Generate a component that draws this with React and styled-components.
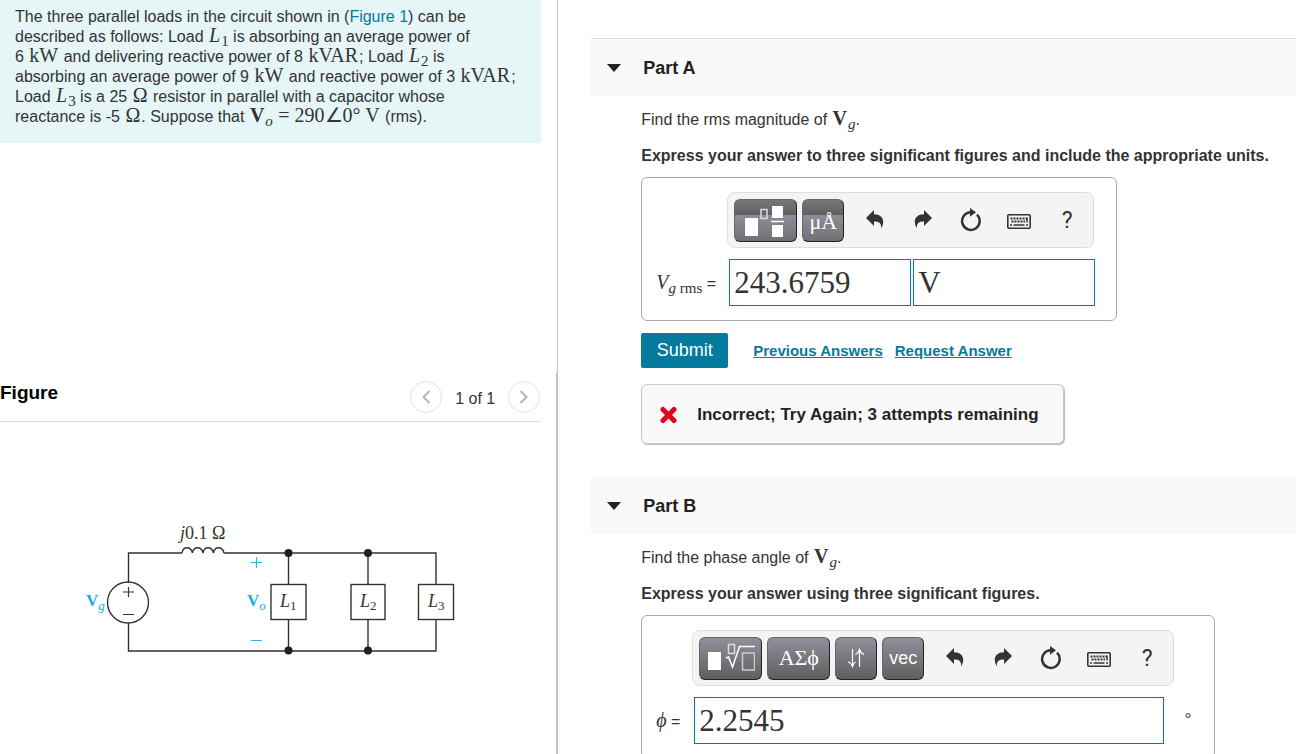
import React, { useState } from 'react';
import styled, { createGlobalStyle } from 'styled-components';

const GlobalStyle = createGlobalStyle`
  * {
    box-sizing: border-box;
  }

  body {
    margin: 0;
    background: #fff;
    color: #333;
    font-family: "Liberation Sans", Arial, sans-serif;
    font-size: 16px;
    line-height: 20px;
  }

  p, h2, h3 {
    margin: 0;
  }

  button, input {
    font-family: inherit;
    color: inherit;
  }
`;

const Page = styled.div`
  display: grid;
  grid-template-columns: 43% 1fr;
  height: 100vh;
  overflow: hidden;
`;

const LeftPane = styled.aside`
  display: flex;
  flex-direction: column;
  min-height: 0;
`;

const ProblemPane = styled.section`
  flex: 0 0 373px;
  padding-right: 16px;
  border-right: 1px solid #b8c6d9;
  margin-right: -1px;
`;

const Problem = styled.p`
  padding: 7px 14px 16px 15px;
  background: #e6f6f7;
`;

const FigureLink = styled.a`
  color: #047a9c;
  text-decoration: none;
`;

const Tex = styled.span`
  padding: 0 1px;
  font-family: "Liberation Serif", "Times New Roman", serif;
  font-size: 20px;
  line-height: 16px;
  font-style: ${props => (props.$italic ? 'italic' : 'normal')};
  font-weight: ${props => (props.$bold ? 'bold' : 'normal')};
`;

const Sub = styled.sub`
  font-family: "Liberation Serif", "Times New Roman", serif;
  font-size: 15px;
  font-weight: normal;
  line-height: 0;
  vertical-align: -4px;
  font-style: ${props => (props.$italic ? 'italic' : 'normal')};
`;

const FigurePane = styled.section`
  flex: 1;
  padding-right: 16px;
  border-right: 2px solid #b8c6d9;
  margin-right: -1px;
`;

const FigureHeader = styled.div`
  display: flex;
  align-items: center;
  justify-content: space-between;
  height: 49px;
  border-bottom: 1px solid #dcdcdc;
`;

const FigureTitle = styled.h2`
  padding-bottom: 8px;
  font-size: 19px;
  line-height: 24px;
  color: #000;
`;

const Pager = styled.div`
  display: flex;
  align-items: center;
  gap: 13px;
`;

const PagerLabel = styled.span`
  padding-top: 4px;
`;

const PagerButton = styled.button`
  display: flex;
  align-items: center;
  justify-content: center;
  width: 32px;
  height: 32px;
  padding: 0;
  border: 1px solid #e2e2e2;
  border-radius: 50%;
  background: #fff;
  color: #b5b5b5;
`;

const Circuit = styled.svg`
  display: block;
  margin: 98px 0 0 80px;
  font-family: "Liberation Serif", "Times New Roman", serif;
`;

const RightPane = styled.main`
  min-width: 0;
  padding: 38px 0 0 34px;
  overflow: hidden;
`;

const Part = styled.section`
  padding-bottom: 32px;
`;

const PartHeader = styled.header`
  display: flex;
  align-items: center;
  height: 58px;
  border-top: 1px solid ${props => (props.$first ? '#dcdcdc' : '#f9f9f9')};
  background: #f9f9f9;
`;

const Toggle = styled.button`
  display: flex;
  padding: 0 16px;
  border: 0;
  background: none;
  color: #222;
`;

const PartTitle = styled.h3`
  padding-left: 6px;
  font-size: 18px;
  color: #222;
`;

const PartBody = styled.div`
  padding-left: 50px;
`;

const Question = styled.p`
  padding: 14px 0 13px;
`;

const Instruction = styled.p`
  padding: 3px 0 11px;
  font-weight: bold;
  white-space: nowrap;
`;

const AnswerBox = styled.div`
  display: inline-grid;
  grid-template-columns: ${props => props.$labelWidth} auto;
  row-gap: 11px;
  padding: 14px ${props => (props.$unit ? '13px' : '21px')} 14px 14px;
  border: 1px solid #aaa;
  border-radius: 6px;
  vertical-align: top;
`;

const Toolbar = styled.div`
  grid-column: 2;
  justify-self: start;
  display: flex;
  align-items: center;
  gap: 5px;
  height: 56px;
  padding: 0 2px 0 6px;
  border: 1px solid #ddd;
  border-radius: 8px;
  background: #f4f4f4;
`;

const KeyButton = styled.button`
  display: flex;
  align-items: center;
  justify-content: center;
  width: ${props => (props.$wide ? '63px' : '42px')};
  height: 43px;
  padding: ${props => (props.$split ? '4px' : '0')} 0 0;
  border: 1px solid #666;
  border-right-color: #222;
  border-bottom-color: #222;
  border-radius: 6px;
  background: ${props => (props.$split
    ? 'linear-gradient(#777 0, #606060 15px, #8f8d98 15px, #717174 100%)'
    : 'linear-gradient(#918f9b, #5f5f5f)')};
  color: #fff;
  font-family: ${props => (props.$sans ? 'inherit' : '"Liberation Serif", serif')};
  font-size: ${props => (props.$sans ? '18px' : '22px')};
`;

const IconGroup = styled.div`
  display: flex;
  margin-left: 2px;
`;

const IconButton = styled.button`
  display: flex;
  align-items: center;
  justify-content: center;
  width: 48px;
  height: 40px;
  padding: 0;
  border: 0;
  background: none;
  font-family: Roboto, sans-serif;
  font-size: 23px;
`;

const AnswerLabel = styled.label`
  grid-column: 1;
  align-self: center;
  padding-top: 2px;
  font-size: 16px;
  white-space: nowrap;

  ${Tex} {
    padding: 0;
  }
`;

const Fields = styled.div`
  display: flex;
  align-items: center;
  gap: 2px;
  padding-left: 2px;
`;

const Field = styled.input`
  width: ${props => (props.$wide ? '470px' : '182px')};
  height: 47px;
  padding: 0 4px;
  border: 1px solid #047a9c;
  border-radius: 0;
  background: #fff;
  font-family: "Liberation Serif", "Times New Roman", serif;
  font-size: 31px;
`;

const Unit = styled.span`
  padding: 0 8px 10px 17px;
  color: #555;
  font-family: "Liberation Serif", "Times New Roman", serif;
`;

const Actions = styled.div`
  display: flex;
  align-items: center;
  gap: 12px;
  padding: 12px 0 16px;
`;

const SubmitButton = styled.button`
  width: 87px;
  height: 35px;
  margin-right: 13px;
  padding: 0;
  border: 0;
  border-radius: 2px;
  background: #047a9c;
  color: #fff;
  font-size: 18px;
`;

const ActionLink = styled.a`
  color: #047a9c;
  font-size: 15px;
  font-weight: bold;
`;

const Feedback = styled.div`
  display: inline-flex;
  align-items: center;
  gap: 18px;
  height: 60px;
  padding: 2px 24px 0 17px;
  border: 1px solid #c8c8c8;
  border-radius: 6px;
  background: #f9f9f9;
  box-shadow: 1px 1px 1px #bbb;
  color: #222;
  font-size: 17px;
  font-weight: bold;
  vertical-align: top;
`;

const Chevron = ({ right }) => (
  <svg width="10" height="16" viewBox="0 0 10 16" fill="none" stroke="currentColor" strokeWidth="2">
    <path d={right ? 'M1.500 2l6 6-6 6' : 'M8.500 2l-6 6 6 6'} />
  </svg>
);

const Arrow = ({ forward }) => (
  <svg width="18" height="20" viewBox="0 0 18 20" fill="currentColor">
    <path
      transform={forward ? 'translate(18 0) scale(-1 1)' : undefined}
      d="M0 8L8 0v4.300c6 0 9.200 3.200 9.200 7.500 0 2.500-.8 4.500-2.200 6.700.6-5.200-1.800-7-7-7v4.500z"
    />
  </svg>
);

const ResetIcon = () => (
  <svg width="22" height="24" viewBox="0 0 22 24">
    <path d="M17 6.700A8.800 8.800 0 1 1 10 4.300" fill="none" stroke="currentColor" strokeWidth="2.500" />
    <path d="M10 0l6 4.300L10 8.800z" fill="currentColor" />
  </svg>
);

const KeyboardIcon = () => (
  <svg width="24" height="20" viewBox="0 0 24 20" fill="none" stroke="currentColor">
    <rect x="0.800" y="4.800" width="22.400" height="13.400" rx="1" strokeWidth="1.600" />
    <path d="M3.500 8.500H20M4.500 11.500H18" strokeWidth="2" strokeDasharray="2 1" />
    <path d="M20 7.500v5M3 15h2M6.500 15h11M19 15h2" strokeWidth="1.500" />
  </svg>
);

const TemplateIcon = () => (
  <svg width="42" height="34" viewBox="0 0 42 34">
    <path d="M0 13h13v18H0zM27 1h11v12H27zM27 20h11v12H27z" fill="#fff" />
    <path d="M16 4.500h6v9h-6z" fill="none" stroke="#ddd" strokeWidth="1.500" />
    <path d="M26 16.500h13" stroke="#fff" strokeWidth="1.500" />
  </svg>
);

const RootIcon = () => (
  <svg width="49" height="30" viewBox="0 0 49 30">
    <path d="M2 9h13v18H2z" fill="#fff" />
    <path d="M22.500 1.500h6v9h-6z" fill="none" stroke="#ddd" strokeWidth="1.500" />
    <path d="M20 15l2.500-1 4 10L33.500 3.500H49" fill="none" stroke="#fff" strokeWidth="1.500" />
    <path d="M36.500 10h12v17h-12z" fill="none" stroke="#ccc" strokeWidth="1.500" />
  </svg>
);

const SwapIcon = () => (
  <svg width="18" height="20" viewBox="0 0 18 20" fill="none" stroke="#fff" strokeWidth="1.200">
    <path d="M5.500 1v17M1 14q3 .5 4.500 4.500Q6.500 15 8.500 14M12.500 19V2M8.500 6.500Q11.500 5 12.500 1.500 14 5.500 17 6.500" />
  </svg>
);

const CrossIcon = () => (
  <svg width="20" height="18" viewBox="0 0 20 18">
    <path d="M4 3.500l11 11m0-11l-11 11" stroke="#e1001f" strokeWidth="5" strokeLinecap="round" />
  </svg>
);

const EditIcons = () => (
  <IconGroup>
    <IconButton type="button" aria-label="Undo"><Arrow /></IconButton>
    <IconButton type="button" aria-label="Redo"><Arrow forward /></IconButton>
    <IconButton type="button" aria-label="Reset"><ResetIcon /></IconButton>
    <IconButton type="button" aria-label="Keyboard shortcuts"><KeyboardIcon /></IconButton>
    <IconButton type="button" aria-label="Help">?</IconButton>
  </IconGroup>
);

const CircuitFigure = () => (
  <Circuit width="380" height="140" viewBox="80 520 380 140">
    <g fill="none" stroke="#333" strokeWidth="1.400">
      <path d="M128.500 583v-30H182M224 553h212v32M436 619v32H128.500v-28" />
      <path d="M182 553c1-7 9-7 10.500 0 1-7 9-7 10.500 0 1-7 9-7 10.500 0 1-7 9-7 10.500 0" />
      <path d="M288.500 553v32M288.500 619v32M368 553v32M368 619v32" />
      <circle cx="128" cy="602.500" r="20.500" />
      <rect x="271" y="584.500" width="35" height="35" />
      <rect x="351" y="584.500" width="34" height="35" />
      <rect x="418.500" y="584.500" width="35" height="35" />
      <path d="M123 592h11M128.500 587v10M123 614.500h11" strokeWidth="1.200" />
    </g>
    <g fill="#231f20">
      <circle cx="288.500" cy="553" r="4" />
      <circle cx="368" cy="553" r="4" />
      <circle cx="288.500" cy="650.500" r="4" />
      <circle cx="368" cy="650.500" r="4" />
    </g>
    <path d="M251 562.500h11M256.500 557v11M251 640.500h11" stroke="#2db4ee" strokeWidth="1.200" />
    <g fontSize="18" fill="#333">
      <text x="180" y="539"><tspan fontStyle="italic">j</tspan>0.1 Ω</text>
      <text x="280" y="607" fontStyle="italic">L<tspan fontSize="13" fontStyle="normal" dy="3">1</tspan></text>
      <text x="360" y="607" fontStyle="italic">L<tspan fontSize="13" fontStyle="normal" dy="3">2</tspan></text>
      <text x="428" y="607" fontStyle="italic">L<tspan fontSize="13" fontStyle="normal" dy="3">3</tspan></text>
    </g>
    <g fontSize="17" fontWeight="bold" fill="#13aeef">
      <text x="86" y="606">V<tspan fontSize="13" fontStyle="italic" fontWeight="normal" dy="4">g</tspan></text>
      <text x="247" y="606">V<tspan fontSize="13" fontStyle="italic" fontWeight="normal" dy="4">o</tspan></text>
    </g>
  </Circuit>
);

const ProblemText = () => (
  <Problem>
    The three parallel loads in the circuit shown in (<FigureLink href="#figure">Figure 1</FigureLink>) can be
    <br />
    described as follows: Load <Tex $italic>L</Tex><Sub>1</Sub> is absorbing an average power of
    <br />
    6 <Tex>kW</Tex> and delivering reactive power of 8 <Tex>kVAR</Tex>; Load <Tex $italic>L</Tex><Sub>2</Sub> is
    <br />
    absorbing an average power of 9 <Tex>kW</Tex> and reactive power of 3 <Tex>kVAR</Tex>;
    <br />
    Load <Tex $italic>L</Tex><Sub>3</Sub> is a 25 <Tex>Ω</Tex> resistor in parallel with a capacitor whose
    <br />
    reactance is -5 <Tex>Ω</Tex>. Suppose that <Tex $bold>V</Tex><Sub $italic>o</Sub>{' '}
    <Tex>= 290∠0° V</Tex> (rms).
  </Problem>
);

const PartHeading = ({ title, first }) => (
  <PartHeader $first={first}>
    <Toggle type="button" aria-label={title}>
      <svg width="14" height="8" viewBox="0 0 14 8"><path d="M0 0h14L7 8z" fill="currentColor" /></svg>
    </Toggle>
    <PartTitle>{title}</PartTitle>
  </PartHeader>
);

const App = () => {
  const [magnitude, setMagnitude] = useState('243.6759');
  const [unit, setUnit] = useState('V');
  const [phase, setPhase] = useState('2.2545');

  return (
    <>
      <GlobalStyle />
      <Page>
        <LeftPane>
          <ProblemPane>
            <ProblemText />
          </ProblemPane>
          <FigurePane id="figure">
            <FigureHeader>
              <FigureTitle>Figure</FigureTitle>
              <Pager>
                <PagerButton type="button" aria-label="Previous figure"><Chevron /></PagerButton>
                <PagerLabel>1 of 1</PagerLabel>
                <PagerButton type="button" aria-label="Next figure"><Chevron right /></PagerButton>
              </Pager>
            </FigureHeader>
            <CircuitFigure />
          </FigurePane>
        </LeftPane>

        <RightPane>
          <Part>
            <PartHeading title="Part A" first />
            <PartBody>
              <Question>
                Find the rms magnitude of <Tex $bold>V</Tex><Sub $italic>g</Sub>.
              </Question>
              <Instruction>
                Express your answer to three significant figures and include the appropriate units.
              </Instruction>
              <AnswerBox $labelWidth="71px">
                <Toolbar>
                  <KeyButton type="button" $wide aria-label="Templates" $split><TemplateIcon /></KeyButton>
                  <KeyButton type="button" $split>μÅ</KeyButton>
                  <EditIcons />
                </Toolbar>
                <AnswerLabel htmlFor="magnitude">
                  <Tex $italic>V</Tex><Sub $italic>g</Sub><Sub> rms</Sub> =
                </AnswerLabel>
                <Fields>
                  <Field id="magnitude" value={magnitude} onChange={e => setMagnitude(e.target.value)} />
                  <Field aria-label="Units" value={unit} onChange={e => setUnit(e.target.value)} />
                </Fields>
              </AnswerBox>
              <Actions>
                <SubmitButton type="button">Submit</SubmitButton>
                <ActionLink href="#previous">Previous Answers</ActionLink>
                <ActionLink href="#request">Request Answer</ActionLink>
              </Actions>
              <Feedback>
                <CrossIcon />
                Incorrect; Try Again; 3 attempts remaining
              </Feedback>
            </PartBody>
          </Part>

          <Part>
            <PartHeading title="Part B" />
            <PartBody>
              <Question>
                Find the phase angle of <Tex $bold>V</Tex><Sub $italic>g</Sub>.
              </Question>
              <Instruction>Express your answer using three significant figures.</Instruction>
              <AnswerBox $labelWidth="36px" $unit>
                <Toolbar>
                  <KeyButton type="button" $wide aria-label="Roots"><RootIcon /></KeyButton>
                  <KeyButton type="button" $wide>ΑΣϕ</KeyButton>
                  <KeyButton type="button" aria-label="Swap"><SwapIcon /></KeyButton>
                  <KeyButton type="button" $sans>vec</KeyButton>
                  <EditIcons />
                </Toolbar>
                <AnswerLabel htmlFor="phase">
                  <Tex $italic>ϕ</Tex> =
                </AnswerLabel>
                <Fields>
                  <Field id="phase" $wide value={phase} onChange={e => setPhase(e.target.value)} />
                  <Unit>∘</Unit>
                </Fields>
              </AnswerBox>
            </PartBody>
          </Part>
        </RightPane>
      </Page>
    </>
  );
};

export default App;
